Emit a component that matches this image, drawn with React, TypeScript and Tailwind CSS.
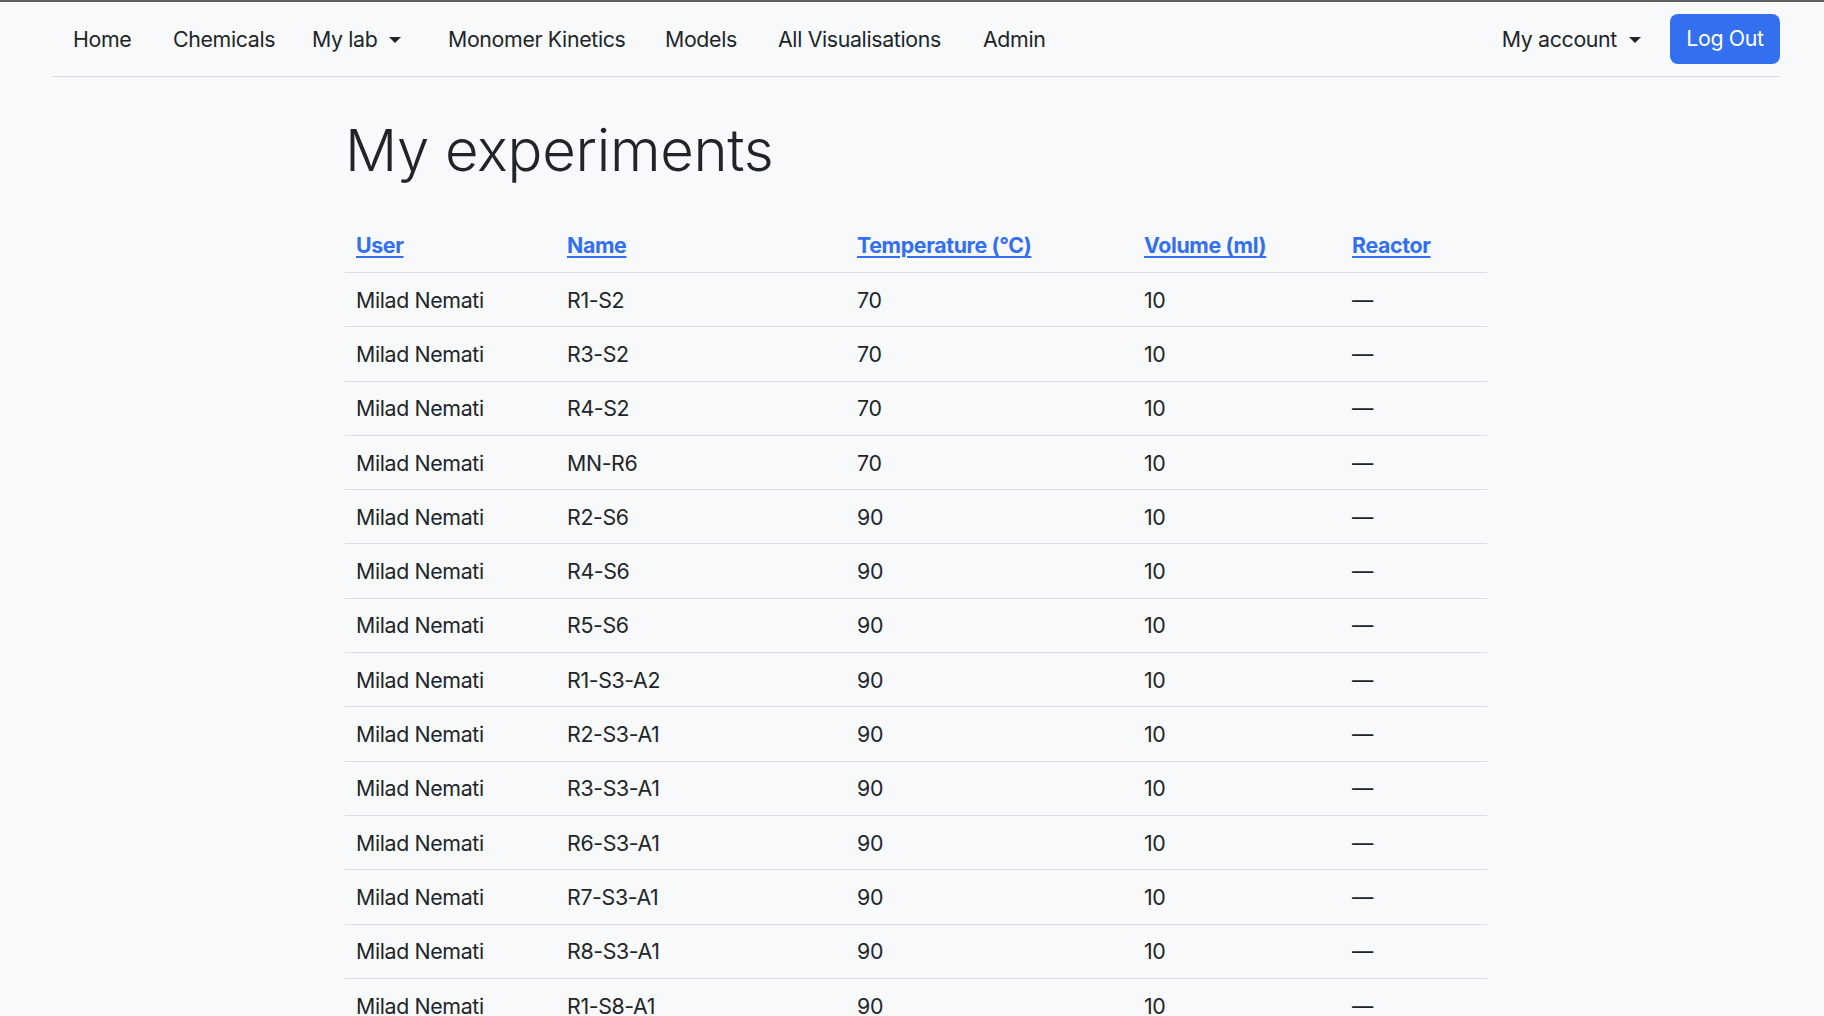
const rows: [string, string][] = [
  ["R1-S2", "70"],
  ["R3-S2", "70"],
  ["R4-S2", "70"],
  ["MN-R6", "70"],
  ["R2-S6", "90"],
  ["R4-S6", "90"],
  ["R5-S6", "90"],
  ["R1-S3-A2", "90"],
  ["R2-S3-A1", "90"],
  ["R3-S3-A1", "90"],
  ["R6-S3-A1", "90"],
  ["R7-S3-A1", "90"],
  ["R8-S3-A1", "90"],
  ["R1-S8-A1", "90"],
  ["R2-S8-A1", "90"],
];

function Caret() {
  return <span className="ml-[12px] inline-block border-x-[6px] border-t-[6px] border-x-transparent border-t-[#212529] align-middle" />;
}

function Navbar() {
  return (
    <nav className="ml-[52px] mr-[44px] flex h-[75px] items-center border-b border-[#dcdee1] text-[21.33px] tracking-[-0.35px] text-[#212529]">
      <ul className="flex items-center pl-[21px] pt-[2px]">
        <li className="w-[100px]">Home</li>
        <li className="w-[139px]">Chemicals</li>
        <li className="flex w-[136px] items-center">
          My lab
          <Caret />
        </li>
        <li className="w-[217px]">Monomer Kinetics</li>
        <li className="w-[113px]">Models</li>
        <li className="w-[205px]">All Visualisations</li>
        <li>Admin</li>
      </ul>
      <div className="ml-auto flex items-center">
        <span className="flex items-center pt-[2px]">
          My account
          <Caret />
        </span>
        <button className="ml-[29px] h-[50px] w-[110px] rounded-[8px] bg-[#3370f0] text-white">Log Out</button>
      </div>
    </nav>
  );
}

function App() {
  const cols = ["User", "Name", "Temperature (°C)", "Volume (ml)", "Reactor"];
  const widths = ["w-[211px]", "w-[290px]", "w-[287px]", "w-[208px]", "w-[146px]"];
  return (
    <div className="h-[1016px] overflow-hidden bg-[#f8f9fa] font-['Inter','Liberation_Sans',sans-serif]">
      <div className="h-[2px] bg-[#5f5f5f]" />
      <Navbar />
      <main className="ml-[345px] w-[1142px]">
        <h1 className="mt-[39px] text-[58px] font-light leading-[1.2] tracking-[-0.3px] text-[#212529]">My experiments</h1>
        <table className="mt-[33px] w-full table-fixed border-collapse text-left text-[21.33px] leading-[32px] tracking-[-0.35px] text-[#212529]">
          <thead>
            <tr className="border-b border-[#dcdee1]">
              {cols.map((c, i) => (
                <th key={c} className={`${widths[i]} px-[11px] py-[10.67px] font-bold`}>
                  <a className="text-[#3370f0] underline underline-offset-[3px]" href="#">
                    {c}
                  </a>
                </th>
              ))}
            </tr>
          </thead>
          <tbody>
            {rows.map(([name, temp]) => (
              <tr key={name} className="border-b border-[#dcdee1]">
                <td className="px-[11px] py-[10.67px]">Milad Nemati</td>
                <td className="px-[11px] py-[10.67px]">{name}</td>
                <td className="px-[11px] py-[10.67px]">{temp}</td>
                <td className="px-[11px] py-[10.67px]">10</td>
                <td className="px-[11px] py-[10.67px]">—</td>
              </tr>
            ))}
          </tbody>
        </table>
      </main>
    </div>
  );
}

export default App;
